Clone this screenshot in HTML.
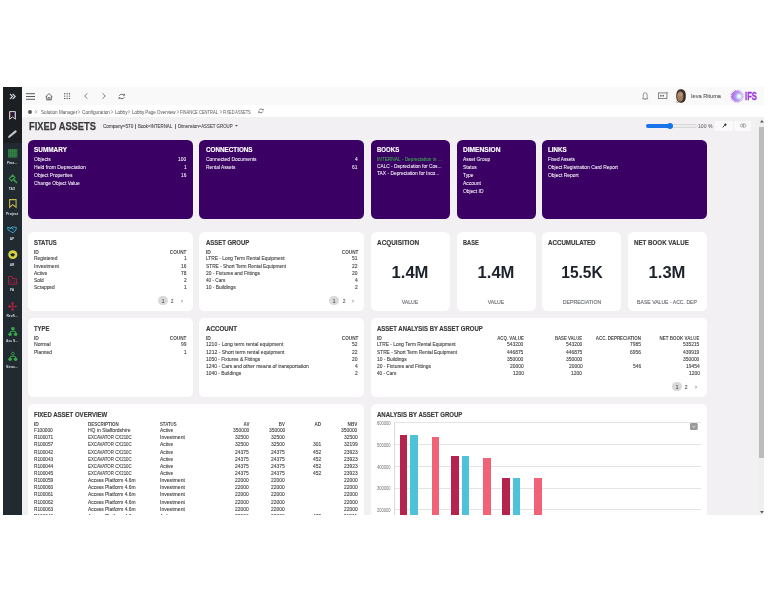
<!DOCTYPE html>
<html><head><meta charset="utf-8"><style>
html,body{margin:0;padding:0;background:#fff;width:768px;height:602px;overflow:hidden}
#frame{position:absolute;left:3px;top:87px;width:761.3px;height:428.2px;overflow:hidden}
#inner{position:absolute;left:-3px;top:-87px;width:768px;height:602px;will-change:transform}
.t{position:absolute;white-space:nowrap;font-family:"Liberation Sans", sans-serif}
</style></head><body>
<div id="frame"><div id="inner"><div style="position:absolute;left:3.00px;top:117.00px;width:762.00px;height:400.00px;background:#f2f0f3"></div><div style="position:absolute;left:3.00px;top:87.00px;width:762.00px;height:18.00px;background:#f9f9f9"></div><div style="position:absolute;left:21.70px;top:105.00px;width:743.00px;height:12.00px;background:#ffffff"></div><div style="position:absolute;left:3.00px;top:87.00px;width:18.70px;height:429.00px;background:#222a31"></div><div style="position:absolute;left:3.00px;top:87.00px;width:18.70px;height:55.50px;background:#1c1f22"></div><svg style="position:absolute;left:9.00px;top:92.60px;overflow:visible" width="7" height="7" viewBox="0 0 7 7"><path d="M1 1 L3.5 3.5 L1 6 M3.7 1 L6.2 3.5 L3.7 6" fill="none" stroke="#c5cad0" stroke-width="1.2"/></svg><svg style="position:absolute;left:9.00px;top:110.60px;overflow:visible" width="7" height="8.8" viewBox="0 0 7 8.8"><path d="M0.6 0.6 H6.4 V8.2 L3.5 5.9 L0.6 8.2 Z" fill="none" stroke="#d6d6da" stroke-width="1"/><rect x="1.1" y="1.1" width="0.9" height="5" fill="#a8304e"/><rect x="5.0" y="1.1" width="0.9" height="5" fill="#5e56a8"/></svg><svg style="position:absolute;left:8.00px;top:130.20px;overflow:visible" width="9" height="8" viewBox="0 0 9 8"><path d="M1.2 6.8 L7.6 1.4" stroke="#c4c8ce" stroke-width="2.1" stroke-linecap="round"/><path d="M0.6 7.5 L1.6 6.5" stroke="#9aa4b4" stroke-width="1.2"/></svg><svg style="position:absolute;left:7.65px;top:149.00px;overflow:visible" width="9.3" height="8.6" viewBox="0 0 9.3 8.6"><rect width="9.3" height="8.6" fill="#35844a"/><circle cx="1.16" cy="1.07" r="0.75" fill="#24512d" opacity="0.75"/><circle cx="1.16" cy="3.22" r="0.75" fill="#24512d" opacity="0.75"/><circle cx="1.16" cy="5.37" r="0.75" fill="#24512d" opacity="0.75"/><circle cx="1.16" cy="7.52" r="0.75" fill="#24512d" opacity="0.75"/><circle cx="3.49" cy="1.07" r="0.75" fill="#24512d" opacity="0.75"/><circle cx="3.49" cy="3.22" r="0.75" fill="#24512d" opacity="0.75"/><circle cx="3.49" cy="5.37" r="0.75" fill="#24512d" opacity="0.75"/><circle cx="3.49" cy="7.52" r="0.75" fill="#24512d" opacity="0.75"/><circle cx="5.82" cy="1.07" r="0.75" fill="#24512d" opacity="0.75"/><circle cx="5.82" cy="3.22" r="0.75" fill="#24512d" opacity="0.75"/><circle cx="5.82" cy="5.37" r="0.75" fill="#24512d" opacity="0.75"/><circle cx="5.82" cy="7.52" r="0.75" fill="#24512d" opacity="0.75"/><circle cx="8.15" cy="1.07" r="0.75" fill="#24512d" opacity="0.75"/><circle cx="8.15" cy="3.22" r="0.75" fill="#24512d" opacity="0.75"/><circle cx="8.15" cy="5.37" r="0.75" fill="#24512d" opacity="0.75"/><circle cx="8.15" cy="7.52" r="0.75" fill="#24512d" opacity="0.75"/></svg><div class="t" style="left:-137.70px;width:300px;text-align:center;top:160.99px;font-size:3.708px;line-height:4.45px;font-weight:700;color:#d5dae0;transform:scaleX(0.9579);transform-origin:50% 50%;">Fina...</div><svg style="position:absolute;left:8.00px;top:174.20px;overflow:visible" width="9.2" height="9.3" viewBox="0 0 9.2 9.3"><path d="M1.2 4.6 L4.6 1.2 L7 3.6 L3.6 7 Z" fill="none" stroke="#3aa14a" stroke-width="1.2"/><path d="M5.6 5.6 L8.6 8.6" stroke="#3aa14a" stroke-width="1.5" stroke-linecap="round"/></svg><div class="t" style="left:-137.70px;width:300px;text-align:center;top:186.99px;font-size:3.708px;line-height:4.45px;font-weight:700;color:#d5dae0;transform:scaleX(0.897);transform-origin:50% 50%;">TAX</div><svg style="position:absolute;left:8.60px;top:199.00px;overflow:visible" width="7.7" height="9" viewBox="0 0 7.7 9"><path d="M0.6 0.6 H7.1 V8.3 L3.85 5.6 L0.6 8.3 Z" fill="none" stroke="#c4b64a" stroke-width="1.1"/></svg><div class="t" style="left:-137.70px;width:300px;text-align:center;top:211.99px;font-size:3.708px;line-height:4.45px;font-weight:700;color:#d5dae0;transform:scaleX(0.9681);transform-origin:50% 50%;">Project</div><svg style="position:absolute;left:7.00px;top:225.50px;overflow:visible" width="10" height="7.4" viewBox="0 0 10 7.4"><path d="M0.6 1.2 L3.2 2 L5.6 1 L9.4 1.4 L9 4 L6 6.8 L3.6 5.6 L1 3.8 Z" fill="none" stroke="#3aa2c8" stroke-width="1"/><path d="M2.8 2.8 L5.2 2.2 L7.2 4.4" fill="none" stroke="#3aa2c8" stroke-width="0.8"/></svg><div class="t" style="left:-137.70px;width:300px;text-align:center;top:236.99px;font-size:3.708px;line-height:4.45px;font-weight:700;color:#d5dae0;transform:scaleX(0.892);transform-origin:50% 50%;">AP</div><svg style="position:absolute;left:7.70px;top:250.40px;overflow:visible" width="9.6" height="9.1" viewBox="0 0 9.6 9.1"><ellipse cx="4.8" cy="4.55" rx="4.6" ry="4.4" fill="#d8d243"/><path d="M2.3 4 Q4.6 2.2 7 4.2 L5.8 6.6 L3.2 6.2 Z" fill="#1f262c"/><path d="M0.3 3.2 Q0 4.6 0.6 6" stroke="#5fb04a" stroke-width="0.7" fill="none"/></svg><div class="t" style="left:-137.70px;width:300px;text-align:center;top:262.99px;font-size:3.708px;line-height:4.45px;font-weight:700;color:#d5dae0;transform:scaleX(0.874);transform-origin:50% 50%;">AR</div><svg style="position:absolute;left:8.20px;top:276.10px;overflow:visible" width="9.1" height="8.8" viewBox="0 0 9.1 8.8"><path d="M0.5 0.5 H4.4 V2.6 H8.6 V8.3 H0.5 Z" fill="none" stroke="#9c2340" stroke-width="1"/><path d="M2.6 3.2 V5 M6.2 4 V5.4 M1.6 6.2 H3.6 M5.2 6.4 H7.4" stroke="#9c2340" stroke-width="0.9"/></svg><div class="t" style="left:-137.70px;width:300px;text-align:center;top:287.99px;font-size:3.708px;line-height:4.45px;font-weight:700;color:#d5dae0;transform:scaleX(0.8915);transform-origin:50% 50%;">FA</div><svg style="position:absolute;left:7.60px;top:301.60px;overflow:visible" width="9.2" height="9" viewBox="0 0 9.2 9"><path d="M1.4 4.5 H8.2 M4.6 4.5 L4.6 1.2 M4.6 4.5 L4.6 7.8" stroke="#a82241" stroke-width="1"/><circle cx="1.6" cy="4.5" r="1.4" fill="#a82241"/><circle cx="4.6" cy="1.4" r="1.3" fill="#a82241"/><circle cx="4.6" cy="7.6" r="1.3" fill="#a82241"/><path d="M7.4 3 L9.2 4.5 L7.4 6Z" fill="#a82241"/></svg><div class="t" style="left:-137.70px;width:300px;text-align:center;top:313.99px;font-size:3.708px;line-height:4.45px;font-weight:700;color:#d5dae0;transform:scaleX(0.9039);transform-origin:50% 50%;">RevS...</div><svg style="position:absolute;left:7.60px;top:326.70px;overflow:visible" width="9.6" height="9" viewBox="0 0 9.6 9"><rect x="3.3" y="0.2" width="3.2" height="3" fill="#3aa64a"/><path d="M4.9 3 V4.5 M2.2 6 V4.5 H7.6 V6" stroke="#3aa64a" stroke-width="0.8" fill="none"/><circle cx="2.1" cy="7.2" r="1.8" fill="#3aa64a"/><circle cx="7.6" cy="7.2" r="1.8" fill="#3aa64a"/></svg><div class="t" style="left:-137.70px;width:300px;text-align:center;top:338.99px;font-size:3.708px;line-height:4.45px;font-weight:700;color:#d5dae0;transform:scaleX(0.883);transform-origin:50% 50%;">Acc S...</div><svg style="position:absolute;left:7.60px;top:351.80px;overflow:visible" width="9.6" height="9" viewBox="0 0 9.6 9"><circle cx="4.9" cy="1.6" r="1.4" fill="none" stroke="#3aa64a" stroke-width="0.8"/><path d="M4.9 3 V4.5 M2.2 6 V4.5 H7.6 V6" stroke="#3aa64a" stroke-width="0.8" fill="none"/><circle cx="2.1" cy="7.2" r="1.8" fill="#3aa64a"/><circle cx="7.6" cy="7.2" r="1.8" fill="#3aa64a"/></svg><div class="t" style="left:-137.70px;width:300px;text-align:center;top:364.99px;font-size:3.708px;line-height:4.45px;font-weight:700;color:#d5dae0;transform:scaleX(0.9534);transform-origin:50% 50%;">Struc...</div><svg style="position:absolute;left:26.30px;top:92.80px;overflow:visible" width="9" height="7" viewBox="0 0 9 7"><path d="M0 0.7H9M0 3.5H9M0 6.3H9" stroke="#5a5a5a" stroke-width="1"/></svg><svg style="position:absolute;left:45.20px;top:92.70px;overflow:visible" width="8" height="7.4" viewBox="0 0 8 7.4"><path d="M0.5 3.9 L4 0.6 L7.5 3.9 M1.6 3 V6.9 H6.4 V3 M3.1 6.9 V4.6 H4.9 V6.9" fill="none" stroke="#5a5a5a" stroke-width="0.85" stroke-linejoin="round"/></svg><svg style="position:absolute;left:64.40px;top:93.20px;overflow:visible" width="6.5" height="6.3" viewBox="0 0 6.5 6.3"><circle cx="0.70" cy="0.70" r="0.72" fill="#5a5a5a"/><circle cx="0.70" cy="3.10" r="0.72" fill="#5a5a5a"/><circle cx="0.70" cy="5.50" r="0.72" fill="#5a5a5a"/><circle cx="3.10" cy="0.70" r="0.72" fill="#5a5a5a"/><circle cx="3.10" cy="3.10" r="0.72" fill="#5a5a5a"/><circle cx="3.10" cy="5.50" r="0.72" fill="#5a5a5a"/><circle cx="5.50" cy="0.70" r="0.72" fill="#5a5a5a"/><circle cx="5.50" cy="3.10" r="0.72" fill="#5a5a5a"/><circle cx="5.50" cy="5.50" r="0.72" fill="#5a5a5a"/></svg><svg style="position:absolute;left:84.00px;top:93.40px;overflow:visible" width="4" height="6" viewBox="0 0 4 6"><path d="M3.4 0.4 L0.7 3 L3.4 5.6" fill="none" stroke="#5a5a5a" stroke-width="0.8"/></svg><svg style="position:absolute;left:101.90px;top:93.40px;overflow:visible" width="4" height="6" viewBox="0 0 4 6"><path d="M0.6 0.4 L3.3 3 L0.6 5.6" fill="none" stroke="#5a5a5a" stroke-width="0.8"/></svg><svg style="position:absolute;left:118.30px;top:92.80px;overflow:visible" width="7.6" height="7" viewBox="0 0 7.6 7"><path d="M6.3 2.6 A3 3 0 0 0 1.2 2.8 M1.3 4.4 A3 3 0 0 0 6.4 4.2" fill="none" stroke="#5a5a5a" stroke-width="0.9"/><path d="M5 2.6 H7 V0.6 Z M2.6 4.4 H0.6 V6.4 Z" fill="#5a5a5a"/></svg><svg style="position:absolute;left:641.90px;top:91.90px;overflow:visible" width="6.4" height="8" viewBox="0 0 6.4 8"><path d="M1.2 6 V3 A2 2.2 0 0 1 5.2 3 V6 L6 6.8 H0.4 Z" fill="none" stroke="#6a6a6a" stroke-width="0.7"/><path d="M2.4 7.3 H4" stroke="#6a6a6a" stroke-width="0.7"/></svg><svg style="position:absolute;left:658.00px;top:92.20px;overflow:visible" width="10" height="7" viewBox="0 0 10 7"><rect x="0.4" y="0.9" width="8.5" height="5.7" fill="none" stroke="#6a6a6a" stroke-width="0.8"/><rect x="2.2" y="2.9" width="1.3" height="1.7" fill="#555"/><rect x="4.6" y="2.9" width="1.3" height="1.7" fill="#555"/><path d="M8.2 0.2 L9.7 0.2 L9.7 1.6" fill="none" stroke="#888" stroke-width="0.5"/></svg><svg style="position:absolute;left:676.00px;top:88.80px;overflow:visible" width="10" height="14" viewBox="0 0 10 14"><path d="M5 0.2 C8.2 0.2 9.8 2.6 9.8 6.6 C9.8 10.2 9.2 13.8 5.4 13.8 C2 13.8 0.2 11.4 0.2 7 C0.2 2.8 1.8 0.2 5 0.2Z" fill="#3e2b22"/><path d="M4.2 2.6 C6.6 2.6 7.4 4.6 7.3 7.4 C7.2 10.4 6.2 12.6 4.4 12.6 C2.4 12.6 1.1 10.6 1.1 7.6 C1.1 4.6 2 2.6 4.2 2.6Z" fill="#9f7f62"/><ellipse cx="4.3" cy="5.6" rx="2.2" ry="2" fill="#b39377"/><path d="M0.4 11.4 Q1.2 13.4 3 13.8 L0.6 13.6Z" fill="#6c7a88"/></svg><div class="t" style="left:690.90px;top:93.14px;font-size:5.665px;line-height:6.80px;font-weight:400;color:#5d5d5d;transform:scaleX(0.9937);transform-origin:0 50%;-webkit-text-stroke:0.12px #5d5d5d;">Ieva Rituma</div><svg style="position:absolute;left:730.90px;top:89.50px;overflow:visible" width="12.4" height="12.4" viewBox="0 0 12.4 12.4"><defs><radialGradient id="ifsg" cx="0.7" cy="0.52" r="0.75"><stop offset="0" stop-color="#ffffff"/><stop offset="0.22" stop-color="#d8f0f8"/><stop offset="0.5" stop-color="#b89cf0"/><stop offset="1" stop-color="#a662e6"/></radialGradient></defs><line x1="9.80" y1="6.20" x2="12.30" y2="6.20" stroke="#a055e6" stroke-width="1.0" stroke-linecap="round" opacity="0.55"/><line x1="9.68" y1="7.13" x2="12.09" y2="7.78" stroke="#a055e6" stroke-width="1.0" stroke-linecap="round" opacity="0.55"/><line x1="9.32" y1="8.00" x2="11.48" y2="9.25" stroke="#a055e6" stroke-width="1.0" stroke-linecap="round" opacity="0.55"/><line x1="8.75" y1="8.75" x2="10.51" y2="10.51" stroke="#a055e6" stroke-width="1.0" stroke-linecap="round" opacity="0.55"/><line x1="8.00" y1="9.32" x2="9.25" y2="11.48" stroke="#a055e6" stroke-width="1.0" stroke-linecap="round" opacity="0.55"/><line x1="7.13" y1="9.68" x2="7.78" y2="12.09" stroke="#a055e6" stroke-width="1.0" stroke-linecap="round" opacity="0.55"/><line x1="6.20" y1="9.80" x2="6.20" y2="12.30" stroke="#a055e6" stroke-width="1.0" stroke-linecap="round" opacity="0.55"/><line x1="5.27" y1="9.68" x2="4.62" y2="12.09" stroke="#a055e6" stroke-width="1.0" stroke-linecap="round" opacity="0.67"/><line x1="4.40" y1="9.32" x2="3.15" y2="11.48" stroke="#a055e6" stroke-width="1.0" stroke-linecap="round" opacity="0.77"/><line x1="3.65" y1="8.75" x2="1.89" y2="10.51" stroke="#a055e6" stroke-width="1.0" stroke-linecap="round" opacity="0.87"/><line x1="3.08" y1="8.00" x2="0.92" y2="9.25" stroke="#a055e6" stroke-width="1.0" stroke-linecap="round" opacity="0.94"/><line x1="2.72" y1="7.13" x2="0.31" y2="7.78" stroke="#a055e6" stroke-width="1.0" stroke-linecap="round" opacity="0.98"/><line x1="2.60" y1="6.20" x2="0.10" y2="6.20" stroke="#a055e6" stroke-width="1.0" stroke-linecap="round" opacity="1.00"/><line x1="2.72" y1="5.27" x2="0.31" y2="4.62" stroke="#a055e6" stroke-width="1.0" stroke-linecap="round" opacity="0.98"/><line x1="3.08" y1="4.40" x2="0.92" y2="3.15" stroke="#a055e6" stroke-width="1.0" stroke-linecap="round" opacity="0.94"/><line x1="3.65" y1="3.65" x2="1.89" y2="1.89" stroke="#a055e6" stroke-width="1.0" stroke-linecap="round" opacity="0.87"/><line x1="4.40" y1="3.08" x2="3.15" y2="0.92" stroke="#a055e6" stroke-width="1.0" stroke-linecap="round" opacity="0.78"/><line x1="5.27" y1="2.72" x2="4.62" y2="0.31" stroke="#a055e6" stroke-width="1.0" stroke-linecap="round" opacity="0.67"/><line x1="6.20" y1="2.60" x2="6.20" y2="0.10" stroke="#a055e6" stroke-width="1.0" stroke-linecap="round" opacity="0.55"/><line x1="7.13" y1="2.72" x2="7.78" y2="0.31" stroke="#a055e6" stroke-width="1.0" stroke-linecap="round" opacity="0.55"/><line x1="8.00" y1="3.08" x2="9.25" y2="0.92" stroke="#a055e6" stroke-width="1.0" stroke-linecap="round" opacity="0.55"/><line x1="8.75" y1="3.65" x2="10.51" y2="1.89" stroke="#a055e6" stroke-width="1.0" stroke-linecap="round" opacity="0.55"/><line x1="9.32" y1="4.40" x2="11.48" y2="3.15" stroke="#a055e6" stroke-width="1.0" stroke-linecap="round" opacity="0.55"/><line x1="9.68" y1="5.27" x2="12.09" y2="4.62" stroke="#a055e6" stroke-width="1.0" stroke-linecap="round" opacity="0.55"/><circle cx="6.2" cy="6.2" r="5.2" fill="url(#ifsg)"/></svg><div class="t" style="left:744.60px;top:89.90px;font-size:11.2px;line-height:13.44px;font-weight:700;color:#9a36e0;transform:scaleX(0.6887);transform-origin:0 50%;-webkit-text-stroke:0.3px #9a36e0;">IFS</div><div style="position:absolute;left:28.2px;top:109.8px;width:4.1px;height:4.1px;border-radius:50%;background:#5a5a5a"></div><svg style="position:absolute;left:35.30px;top:110.10px;overflow:visible" width="2" height="3.8" viewBox="0 0 2 3.8"><path d="M0.3 0.3 L1.6 1.9 L0.3 3.5" fill="none" stroke="#707070" stroke-width="0.7"/></svg><div class="t" style="left:40.70px;top:110.21px;font-size:4.532px;line-height:5.44px;font-weight:400;color:#5e5e5e;transform:scaleX(1.0217);transform-origin:0 50%;-webkit-text-stroke:0.03px #5e5e5e;">Solution Manager</div><svg style="position:absolute;left:78.00px;top:110.10px;overflow:visible" width="2" height="3.8" viewBox="0 0 2 3.8"><path d="M0.3 0.3 L1.6 1.9 L0.3 3.5" fill="none" stroke="#707070" stroke-width="0.7"/></svg><div class="t" style="left:81.60px;top:110.21px;font-size:4.532px;line-height:5.44px;font-weight:400;color:#5e5e5e;transform:scaleX(1.0397);transform-origin:0 50%;-webkit-text-stroke:0.03px #5e5e5e;">Configuration</div><svg style="position:absolute;left:111.40px;top:110.10px;overflow:visible" width="2" height="3.8" viewBox="0 0 2 3.8"><path d="M0.3 0.3 L1.6 1.9 L0.3 3.5" fill="none" stroke="#707070" stroke-width="0.7"/></svg><div class="t" style="left:114.50px;top:110.21px;font-size:4.532px;line-height:5.44px;font-weight:400;color:#5e5e5e;transform:scaleX(1.0093);transform-origin:0 50%;-webkit-text-stroke:0.03px #5e5e5e;">Lobby</div><svg style="position:absolute;left:128.40px;top:110.10px;overflow:visible" width="2" height="3.8" viewBox="0 0 2 3.8"><path d="M0.3 0.3 L1.6 1.9 L0.3 3.5" fill="none" stroke="#707070" stroke-width="0.7"/></svg><div class="t" style="left:131.70px;top:110.21px;font-size:4.532px;line-height:5.44px;font-weight:400;color:#5e5e5e;transform:scaleX(0.9865);transform-origin:0 50%;-webkit-text-stroke:0.03px #5e5e5e;">Lobby Page Overview</div><svg style="position:absolute;left:177.00px;top:110.10px;overflow:visible" width="2" height="3.8" viewBox="0 0 2 3.8"><path d="M0.3 0.3 L1.6 1.9 L0.3 3.5" fill="none" stroke="#707070" stroke-width="0.7"/></svg><div class="t" style="left:180.30px;top:110.21px;font-size:4.532px;line-height:5.44px;font-weight:400;color:#5e5e5e;transform:scaleX(0.8993);transform-origin:0 50%;-webkit-text-stroke:0.03px #5e5e5e;">FINANCE CENTRAL</div><svg style="position:absolute;left:220.00px;top:110.10px;overflow:visible" width="2" height="3.8" viewBox="0 0 2 3.8"><path d="M0.3 0.3 L1.6 1.9 L0.3 3.5" fill="none" stroke="#707070" stroke-width="0.7"/></svg><div class="t" style="left:223.00px;top:110.21px;font-size:4.532px;line-height:5.44px;font-weight:400;color:#5e5e5e;transform:scaleX(0.8606);transform-origin:0 50%;-webkit-text-stroke:0.03px #5e5e5e;">FIXED ASSETS</div><svg style="position:absolute;left:258.10px;top:108.30px;overflow:visible" width="5.8" height="5.8" viewBox="0 0 5.8 5.8"><path d="M5.0 2.0 A2.5 2.5 0 0 0 0.8 2.3 M0.8 3.8 A2.5 2.5 0 0 0 5.0 3.5" fill="none" stroke="#666" stroke-width="0.8"/><path d="M3.8 2.3 H5.6 V0.5 Z M2.0 3.5 H0.2 V5.3 Z" fill="#666"/></svg><div class="t" style="left:28.80px;top:119.90px;font-size:11.2px;line-height:13.44px;font-weight:700;color:#3a3a3a;transform:scaleX(0.8324);transform-origin:0 50%;-webkit-text-stroke:0.25px #3a3a3a;">FIXED ASSETS</div><div class="t" style="left:103.10px;top:124.11px;font-size:4.635px;line-height:5.56px;font-weight:400;color:#505050;transform:scaleX(1.0016);transform-origin:0 50%;-webkit-text-stroke:0.12px #505050;">Company=570</div><div style="position:absolute;left:135.30px;top:123.60px;width:0.50px;height:5.40px;background:#777"></div><div class="t" style="left:138.20px;top:124.11px;font-size:4.635px;line-height:5.56px;font-weight:400;color:#505050;transform:scaleX(0.9473);transform-origin:0 50%;-webkit-text-stroke:0.12px #505050;">Book=INTERNAL</div><div style="position:absolute;left:175.10px;top:123.60px;width:0.50px;height:5.40px;background:#777"></div><div class="t" style="left:178.10px;top:124.11px;font-size:4.635px;line-height:5.56px;font-weight:400;color:#505050;transform:scaleX(0.9435);transform-origin:0 50%;-webkit-text-stroke:0.12px #505050;">Dimension=ASSET GROUP</div><svg style="position:absolute;left:235.30px;top:125.20px;overflow:visible" width="2.8" height="1.6" viewBox="0 0 2.8 1.6"><path d="M0 0 H2.8 L1.4 1.6 Z" fill="#444"/></svg><div style="position:absolute;left:645.80px;top:124.40px;width:50.90px;height:3.60px;background:#ececec;border:0.5px solid #d8d8d8;border-radius:2px;box-sizing:border-box"></div><div style="position:absolute;left:645.80px;top:124.40px;width:24.00px;height:3.60px;background:#1a73e8;border-radius:2px"></div><div style="position:absolute;left:666.8px;top:123.1px;width:6px;height:6px;border-radius:50%;background:#1a73e8"></div><div class="t" style="left:697.50px;top:123.48px;font-size:5.305px;line-height:6.37px;font-weight:400;color:#777;transform:scaleX(0.9581);transform-origin:0 50%;-webkit-text-stroke:0.12px #777;">100 %</div><div style="position:absolute;left:715.30px;top:120.70px;width:17.50px;height:10.50px;background:#fafafa;border-radius:1px"></div><div style="position:absolute;left:734.20px;top:120.70px;width:16.60px;height:10.50px;background:#fafafa;border-radius:1px"></div><svg style="position:absolute;left:721.50px;top:123.00px;overflow:visible" width="5" height="5" viewBox="0 0 5 5"><path d="M0.6 4.4 L2.8 2.2" stroke="#333" stroke-width="1"/><path d="M2 1.4 L3.2 0.2 L4.8 1.8 L3.6 3 Z" fill="#333"/></svg><svg style="position:absolute;left:739.80px;top:123.20px;overflow:visible" width="5.6" height="5" viewBox="0 0 5.6 5"><circle cx="1.8" cy="2.5" r="1.4" fill="none" stroke="#777" stroke-width="0.6"/><path d="M3.2 0.8 H4.2 A1.7 1.7 0 0 1 4.2 4.2 H3.2 Z" fill="none" stroke="#777" stroke-width="0.6"/></svg><div style="position:absolute;left:758.30px;top:117.00px;width:6.20px;height:398.50px;background:#efefef"></div><div style="position:absolute;left:759.20px;top:127.00px;width:5.00px;height:331.00px;background:#bdbdbd"></div><svg style="position:absolute;left:759.80px;top:119.80px;overflow:visible" width="3.8" height="2.4" viewBox="0 0 3.8 2.4"><path d="M0 2.4 H3.8 L1.9 0 Z" fill="#555"/></svg><svg style="position:absolute;left:759.80px;top:511.20px;overflow:visible" width="3.8" height="2.4" viewBox="0 0 3.8 2.4"><path d="M0 0 H3.8 L1.9 2.4 Z" fill="#555"/></svg><div style="position:absolute;left:28.00px;top:139.80px;width:164.80px;height:79.00px;background:#3a0063;border-radius:5.5px"></div><div class="t" style="left:34.20px;top:146.28px;font-size:6.571px;line-height:7.89px;font-weight:700;color:#ffffff;transform:scaleX(0.978);transform-origin:0 50%;-webkit-text-stroke:0.15px #ffffff;">SUMMARY</div><div class="t" style="left:34.20px;top:156.86px;font-size:4.903px;line-height:5.88px;font-weight:400;color:#ffffff;transform:scaleX(1.0057);transform-origin:0 50%;-webkit-text-stroke:0.04px #ffffff;">Objects</div><div class="t" style="left:34.20px;top:164.86px;font-size:4.903px;line-height:5.88px;font-weight:400;color:#ffffff;transform:scaleX(1.0354);transform-origin:0 50%;-webkit-text-stroke:0.04px #ffffff;">Held from Depreciation</div><div class="t" style="left:34.20px;top:172.86px;font-size:4.903px;line-height:5.88px;font-weight:400;color:#ffffff;transform:scaleX(1.0197);transform-origin:0 50%;-webkit-text-stroke:0.04px #ffffff;">Object Properties</div><div class="t" style="left:34.20px;top:180.86px;font-size:4.903px;line-height:5.88px;font-weight:400;color:#ffffff;transform:scaleX(0.9919);transform-origin:0 50%;-webkit-text-stroke:0.04px #ffffff;">Change Object Value</div><div class="t" style="right:581.50px;top:156.86px;font-size:4.903px;line-height:5.88px;font-weight:400;color:#ffffff;transform:scaleX(0.9981);transform-origin:100% 50%;-webkit-text-stroke:0.04px #fff;">100</div><div class="t" style="right:581.50px;top:164.86px;font-size:4.903px;line-height:5.88px;font-weight:400;color:#ffffff;transform:scaleX(0.9981);transform-origin:100% 50%;-webkit-text-stroke:0.04px #fff;">1</div><div class="t" style="right:581.50px;top:172.86px;font-size:4.903px;line-height:5.88px;font-weight:400;color:#ffffff;transform:scaleX(0.9981);transform-origin:100% 50%;-webkit-text-stroke:0.04px #fff;">16</div><div style="position:absolute;left:199.40px;top:139.80px;width:164.80px;height:79.00px;background:#3a0063;border-radius:5.5px"></div><div class="t" style="left:205.60px;top:146.28px;font-size:6.571px;line-height:7.89px;font-weight:700;color:#ffffff;transform:scaleX(0.96);transform-origin:0 50%;-webkit-text-stroke:0.15px #ffffff;">CONNECTIONS</div><div class="t" style="left:205.60px;top:156.86px;font-size:4.903px;line-height:5.88px;font-weight:400;color:#ffffff;transform:scaleX(1.0158);transform-origin:0 50%;-webkit-text-stroke:0.04px #ffffff;">Connected Documents</div><div class="t" style="left:205.60px;top:164.86px;font-size:4.903px;line-height:5.88px;font-weight:400;color:#ffffff;transform:scaleX(0.9833);transform-origin:0 50%;-webkit-text-stroke:0.04px #ffffff;">Rental Assets</div><div class="t" style="right:410.10px;top:156.86px;font-size:4.903px;line-height:5.88px;font-weight:400;color:#ffffff;transform:scaleX(0.9981);transform-origin:100% 50%;-webkit-text-stroke:0.04px #fff;">4</div><div class="t" style="right:410.10px;top:164.86px;font-size:4.903px;line-height:5.88px;font-weight:400;color:#ffffff;transform:scaleX(0.9981);transform-origin:100% 50%;-webkit-text-stroke:0.04px #fff;">61</div><div style="position:absolute;left:370.80px;top:139.80px;width:79.10px;height:79.00px;background:#3a0063;border-radius:5.5px"></div><div class="t" style="left:377.00px;top:146.28px;font-size:6.571px;line-height:7.89px;font-weight:700;color:#ffffff;transform:scaleX(0.921);transform-origin:0 50%;-webkit-text-stroke:0.15px #ffffff;">BOOKS</div><div class="t" style="left:377.00px;top:156.86px;font-size:4.903px;line-height:5.88px;font-weight:400;color:#3cb54a;transform:scaleX(0.9761);transform-origin:0 50%;-webkit-text-stroke:0.04px #3cb54a;">INTERNAL - Depreciation in ...</div><div class="t" style="left:377.00px;top:163.86px;font-size:4.903px;line-height:5.88px;font-weight:400;color:#ffffff;transform:scaleX(0.976);transform-origin:0 50%;-webkit-text-stroke:0.04px #ffffff;">CALC - Depreciation for Cos...</div><div class="t" style="left:377.00px;top:170.86px;font-size:4.903px;line-height:5.88px;font-weight:400;color:#ffffff;transform:scaleX(0.9949);transform-origin:0 50%;-webkit-text-stroke:0.04px #ffffff;">TAX - Depreciation for Inco...</div><div style="position:absolute;left:456.50px;top:139.80px;width:79.10px;height:79.00px;background:#3a0063;border-radius:5.5px"></div><div class="t" style="left:462.70px;top:146.28px;font-size:6.571px;line-height:7.89px;font-weight:700;color:#ffffff;transform:scaleX(1.0071);transform-origin:0 50%;-webkit-text-stroke:0.15px #ffffff;">DIMENSION</div><div class="t" style="left:462.70px;top:156.86px;font-size:4.903px;line-height:5.88px;font-weight:400;color:#ffffff;transform:scaleX(0.9969);transform-origin:0 50%;-webkit-text-stroke:0.04px #ffffff;">Asset Group</div><div class="t" style="left:462.70px;top:164.86px;font-size:4.903px;line-height:5.88px;font-weight:400;color:#ffffff;transform:scaleX(0.9937);transform-origin:0 50%;-webkit-text-stroke:0.04px #ffffff;">Status</div><div class="t" style="left:462.70px;top:172.86px;font-size:4.903px;line-height:5.88px;font-weight:400;color:#ffffff;transform:scaleX(0.9901);transform-origin:0 50%;-webkit-text-stroke:0.04px #ffffff;">Type</div><div class="t" style="left:462.70px;top:180.86px;font-size:4.903px;line-height:5.88px;font-weight:400;color:#ffffff;transform:scaleX(1.0128);transform-origin:0 50%;-webkit-text-stroke:0.04px #ffffff;">Account</div><div class="t" style="left:462.70px;top:188.86px;font-size:4.903px;line-height:5.88px;font-weight:400;color:#ffffff;transform:scaleX(1.0021);transform-origin:0 50%;-webkit-text-stroke:0.04px #ffffff;">Object ID</div><div style="position:absolute;left:542.20px;top:139.80px;width:164.80px;height:79.00px;background:#3a0063;border-radius:5.5px"></div><div class="t" style="left:548.40px;top:146.28px;font-size:6.571px;line-height:7.89px;font-weight:700;color:#ffffff;transform:scaleX(0.9463);transform-origin:0 50%;-webkit-text-stroke:0.15px #ffffff;">LINKS</div><div class="t" style="left:548.40px;top:156.86px;font-size:4.903px;line-height:5.88px;font-weight:400;color:#ffffff;transform:scaleX(0.9735);transform-origin:0 50%;-webkit-text-stroke:0.04px #ffffff;">Fixed Assets</div><div class="t" style="left:548.40px;top:164.86px;font-size:4.903px;line-height:5.88px;font-weight:400;color:#ffffff;transform:scaleX(1.0056);transform-origin:0 50%;-webkit-text-stroke:0.04px #ffffff;">Object Registration Card Report</div><div class="t" style="left:548.40px;top:172.86px;font-size:4.903px;line-height:5.88px;font-weight:400;color:#ffffff;transform:scaleX(1.0152);transform-origin:0 50%;-webkit-text-stroke:0.04px #ffffff;">Object Report</div><div style="position:absolute;left:28.00px;top:232.40px;width:164.80px;height:79.00px;background:#ffffff;border-radius:5.5px"></div><div class="t" style="left:34.20px;top:238.90px;font-size:6.976px;line-height:8.37px;font-weight:700;color:#3a3a3a;transform:scaleX(0.8494);transform-origin:0 50%;-webkit-text-stroke:0.15px #3a3a3a;">STATUS</div><div class="t" style="left:34.20px;top:249.86px;font-size:4.903px;line-height:5.88px;font-weight:700;color:#474747;transform:scaleX(1.0088);transform-origin:0 50%;">ID</div><div class="t" style="right:581.50px;top:249.86px;font-size:4.903px;line-height:5.88px;font-weight:700;color:#474747;transform:scaleX(0.9536);transform-origin:100% 50%;">COUNT</div><div class="t" style="left:34.20px;top:255.86px;font-size:4.903px;line-height:5.88px;font-weight:400;color:#484848;transform:scaleX(0.9903);transform-origin:0 50%;-webkit-text-stroke:0.12px #484848;">Registered</div><div class="t" style="right:581.50px;top:255.86px;font-size:4.903px;line-height:5.88px;font-weight:400;color:#484848;transform:scaleX(0.9981);transform-origin:100% 50%;-webkit-text-stroke:0.12px #484848;">1</div><div class="t" style="left:34.20px;top:263.86px;font-size:4.903px;line-height:5.88px;font-weight:400;color:#484848;transform:scaleX(1.0406);transform-origin:0 50%;-webkit-text-stroke:0.12px #484848;">Investment</div><div class="t" style="right:581.50px;top:263.86px;font-size:4.903px;line-height:5.88px;font-weight:400;color:#484848;transform:scaleX(0.9981);transform-origin:100% 50%;-webkit-text-stroke:0.12px #484848;">16</div><div class="t" style="left:34.20px;top:270.86px;font-size:4.903px;line-height:5.88px;font-weight:400;color:#484848;transform:scaleX(0.99);transform-origin:0 50%;-webkit-text-stroke:0.12px #484848;">Active</div><div class="t" style="right:581.50px;top:270.86px;font-size:4.903px;line-height:5.88px;font-weight:400;color:#484848;transform:scaleX(0.9981);transform-origin:100% 50%;-webkit-text-stroke:0.12px #484848;">78</div><div class="t" style="left:34.20px;top:277.86px;font-size:4.903px;line-height:5.88px;font-weight:400;color:#484848;transform:scaleX(0.9791);transform-origin:0 50%;-webkit-text-stroke:0.12px #484848;">Sold</div><div class="t" style="right:581.50px;top:277.86px;font-size:4.903px;line-height:5.88px;font-weight:400;color:#484848;transform:scaleX(0.9981);transform-origin:100% 50%;-webkit-text-stroke:0.12px #484848;">2</div><div class="t" style="left:34.20px;top:284.86px;font-size:4.903px;line-height:5.88px;font-weight:400;color:#484848;transform:scaleX(0.9908);transform-origin:0 50%;-webkit-text-stroke:0.12px #484848;">Scrapped</div><div class="t" style="right:581.50px;top:284.86px;font-size:4.903px;line-height:5.88px;font-weight:400;color:#484848;transform:scaleX(0.9981);transform-origin:100% 50%;-webkit-text-stroke:0.12px #484848;">1</div><div style="position:absolute;left:157.90px;top:295.70px;width:9.8px;height:9.8px;border-radius:50%;background:#d9d9d9"></div><div class="t" style="left:12.80px;width:300px;text-align:center;top:298.86px;font-size:4.903px;line-height:5.88px;font-weight:400;color:#555;transform:scaleX(0.9981);transform-origin:50% 50%;-webkit-text-stroke:0.12px #555;">1</div><div class="t" style="left:22.40px;width:300px;text-align:center;top:298.86px;font-size:4.903px;line-height:5.88px;font-weight:400;color:#5a5a5a;transform:scaleX(0.9981);transform-origin:50% 50%;-webkit-text-stroke:0.12px #5a5a5a;">2</div><div class="t" style="left:31.80px;width:300px;text-align:center;top:299.31px;font-size:4.429px;line-height:5.31px;font-weight:400;color:#999;transform:scaleX(0.9506);transform-origin:50% 50%;-webkit-text-stroke:0.12px #999;">&gt;</div><div style="position:absolute;left:199.40px;top:232.40px;width:164.80px;height:79.00px;background:#ffffff;border-radius:5.5px"></div><div class="t" style="left:205.60px;top:238.90px;font-size:6.976px;line-height:8.37px;font-weight:700;color:#3a3a3a;transform:scaleX(0.8513);transform-origin:0 50%;-webkit-text-stroke:0.15px #3a3a3a;">ASSET GROUP</div><div class="t" style="left:205.60px;top:249.86px;font-size:4.903px;line-height:5.88px;font-weight:700;color:#474747;transform:scaleX(1.0088);transform-origin:0 50%;">ID</div><div class="t" style="right:410.10px;top:249.86px;font-size:4.903px;line-height:5.88px;font-weight:700;color:#474747;transform:scaleX(0.9536);transform-origin:100% 50%;">COUNT</div><div class="t" style="left:205.60px;top:255.86px;font-size:4.903px;line-height:5.88px;font-weight:400;color:#484848;transform:scaleX(0.987);transform-origin:0 50%;-webkit-text-stroke:0.12px #484848;">LTRE - Long Term Rental Equipment</div><div class="t" style="right:410.10px;top:255.86px;font-size:4.903px;line-height:5.88px;font-weight:400;color:#484848;transform:scaleX(0.9981);transform-origin:100% 50%;-webkit-text-stroke:0.12px #484848;">51</div><div class="t" style="left:205.60px;top:263.86px;font-size:4.903px;line-height:5.88px;font-weight:400;color:#484848;transform:scaleX(0.9833);transform-origin:0 50%;-webkit-text-stroke:0.12px #484848;">STRE - Short Term Rental Equipment</div><div class="t" style="right:410.10px;top:263.86px;font-size:4.903px;line-height:5.88px;font-weight:400;color:#484848;transform:scaleX(0.9981);transform-origin:100% 50%;-webkit-text-stroke:0.12px #484848;">22</div><div class="t" style="left:205.60px;top:270.86px;font-size:4.903px;line-height:5.88px;font-weight:400;color:#484848;transform:scaleX(1.0004);transform-origin:0 50%;-webkit-text-stroke:0.12px #484848;">20 - Fixtures and Fittings</div><div class="t" style="right:410.10px;top:270.86px;font-size:4.903px;line-height:5.88px;font-weight:400;color:#484848;transform:scaleX(0.9981);transform-origin:100% 50%;-webkit-text-stroke:0.12px #484848;">20</div><div class="t" style="left:205.60px;top:277.86px;font-size:4.903px;line-height:5.88px;font-weight:400;color:#484848;transform:scaleX(0.9578);transform-origin:0 50%;-webkit-text-stroke:0.12px #484848;">40 - Cars</div><div class="t" style="right:410.10px;top:277.86px;font-size:4.903px;line-height:5.88px;font-weight:400;color:#484848;transform:scaleX(0.9981);transform-origin:100% 50%;-webkit-text-stroke:0.12px #484848;">4</div><div class="t" style="left:205.60px;top:284.86px;font-size:4.903px;line-height:5.88px;font-weight:400;color:#484848;transform:scaleX(1.0025);transform-origin:0 50%;-webkit-text-stroke:0.12px #484848;">10 - Buildings</div><div class="t" style="right:410.10px;top:284.86px;font-size:4.903px;line-height:5.88px;font-weight:400;color:#484848;transform:scaleX(0.9981);transform-origin:100% 50%;-webkit-text-stroke:0.12px #484848;">2</div><div style="position:absolute;left:329.30px;top:295.70px;width:9.8px;height:9.8px;border-radius:50%;background:#d9d9d9"></div><div class="t" style="left:184.20px;width:300px;text-align:center;top:298.86px;font-size:4.903px;line-height:5.88px;font-weight:400;color:#555;transform:scaleX(0.9981);transform-origin:50% 50%;-webkit-text-stroke:0.12px #555;">1</div><div class="t" style="left:193.80px;width:300px;text-align:center;top:298.86px;font-size:4.903px;line-height:5.88px;font-weight:400;color:#5a5a5a;transform:scaleX(0.9981);transform-origin:50% 50%;-webkit-text-stroke:0.12px #5a5a5a;">2</div><div class="t" style="left:203.20px;width:300px;text-align:center;top:299.31px;font-size:4.429px;line-height:5.31px;font-weight:400;color:#999;transform:scaleX(0.9506);transform-origin:50% 50%;-webkit-text-stroke:0.12px #999;">&gt;</div><div style="position:absolute;left:370.80px;top:232.40px;width:79.10px;height:79.00px;background:#ffffff;border-radius:5.5px"></div><div class="t" style="left:377.00px;top:238.90px;font-size:6.976px;line-height:8.37px;font-weight:700;color:#3a3a3a;transform:scaleX(0.9196);transform-origin:0 50%;-webkit-text-stroke:0.15px #3a3a3a;">ACQUISITION</div><div class="t" style="left:260.35px;width:300px;text-align:center;top:263.29px;font-size:16.068px;line-height:19.28px;font-weight:700;color:#1c222c;transform:scaleX(1.0348);transform-origin:50% 50%;">1.4M</div><div class="t" style="left:260.35px;width:300px;text-align:center;top:299.04px;font-size:5.768px;line-height:6.92px;font-weight:400;color:#666a70;transform:scaleX(0.9031);transform-origin:50% 50%;-webkit-text-stroke:0.12px #666a70;">VALUE</div><div style="position:absolute;left:456.50px;top:232.40px;width:79.10px;height:79.00px;background:#ffffff;border-radius:5.5px"></div><div class="t" style="left:462.70px;top:238.90px;font-size:6.976px;line-height:8.37px;font-weight:700;color:#3a3a3a;transform:scaleX(0.8099);transform-origin:0 50%;-webkit-text-stroke:0.15px #3a3a3a;">BASE</div><div class="t" style="left:346.05px;width:300px;text-align:center;top:263.29px;font-size:16.068px;line-height:19.28px;font-weight:700;color:#1c222c;transform:scaleX(1.0348);transform-origin:50% 50%;">1.4M</div><div class="t" style="left:346.05px;width:300px;text-align:center;top:299.04px;font-size:5.768px;line-height:6.92px;font-weight:400;color:#666a70;transform:scaleX(0.9031);transform-origin:50% 50%;-webkit-text-stroke:0.12px #666a70;">VALUE</div><div style="position:absolute;left:542.20px;top:232.40px;width:79.10px;height:79.00px;background:#ffffff;border-radius:5.5px"></div><div class="t" style="left:548.40px;top:238.90px;font-size:6.976px;line-height:8.37px;font-weight:700;color:#3a3a3a;transform:scaleX(0.8865);transform-origin:0 50%;-webkit-text-stroke:0.15px #3a3a3a;">ACCUMULATED</div><div class="t" style="left:431.75px;width:300px;text-align:center;top:263.29px;font-size:16.068px;line-height:19.28px;font-weight:700;color:#1c222c;transform:scaleX(0.9684);transform-origin:50% 50%;">15.5K</div><div class="t" style="left:431.75px;width:300px;text-align:center;top:299.04px;font-size:5.768px;line-height:6.92px;font-weight:400;color:#666a70;transform:scaleX(0.9019);transform-origin:50% 50%;-webkit-text-stroke:0.12px #666a70;">DEPRECIATION</div><div style="position:absolute;left:627.90px;top:232.40px;width:79.10px;height:79.00px;background:#ffffff;border-radius:5.5px"></div><div class="t" style="left:634.10px;top:238.90px;font-size:6.976px;line-height:8.37px;font-weight:700;color:#3a3a3a;transform:scaleX(0.8864);transform-origin:0 50%;-webkit-text-stroke:0.15px #3a3a3a;">NET BOOK VALUE</div><div class="t" style="left:517.45px;width:300px;text-align:center;top:263.29px;font-size:16.068px;line-height:19.28px;font-weight:700;color:#1c222c;transform:scaleX(1.0348);transform-origin:50% 50%;">1.3M</div><div class="t" style="left:517.45px;width:300px;text-align:center;top:299.04px;font-size:5.768px;line-height:6.92px;font-weight:400;color:#666a70;transform:scaleX(0.8886);transform-origin:50% 50%;-webkit-text-stroke:0.12px #666a70;">BASE VALUE - ACC. DEP</div><div style="position:absolute;left:28.00px;top:318.30px;width:164.80px;height:79.00px;background:#ffffff;border-radius:5.5px"></div><div class="t" style="left:34.20px;top:324.90px;font-size:6.976px;line-height:8.37px;font-weight:700;color:#3a3a3a;transform:scaleX(0.8399);transform-origin:0 50%;-webkit-text-stroke:0.15px #3a3a3a;">TYPE</div><div class="t" style="left:34.20px;top:335.86px;font-size:4.903px;line-height:5.88px;font-weight:700;color:#474747;transform:scaleX(1.0088);transform-origin:0 50%;">ID</div><div class="t" style="right:581.50px;top:335.86px;font-size:4.903px;line-height:5.88px;font-weight:700;color:#474747;transform:scaleX(0.9536);transform-origin:100% 50%;">COUNT</div><div class="t" style="left:34.20px;top:341.86px;font-size:4.903px;line-height:5.88px;font-weight:400;color:#484848;transform:scaleX(1.056);transform-origin:0 50%;-webkit-text-stroke:0.12px #484848;">Normal</div><div class="t" style="right:581.50px;top:341.86px;font-size:4.903px;line-height:5.88px;font-weight:400;color:#484848;transform:scaleX(0.9981);transform-origin:100% 50%;-webkit-text-stroke:0.12px #484848;">99</div><div class="t" style="left:34.20px;top:349.86px;font-size:4.903px;line-height:5.88px;font-weight:400;color:#484848;transform:scaleX(1.0085);transform-origin:0 50%;-webkit-text-stroke:0.12px #484848;">Planned</div><div class="t" style="right:581.50px;top:349.86px;font-size:4.903px;line-height:5.88px;font-weight:400;color:#484848;transform:scaleX(0.9981);transform-origin:100% 50%;-webkit-text-stroke:0.12px #484848;">1</div><div style="position:absolute;left:199.40px;top:318.30px;width:164.80px;height:79.00px;background:#ffffff;border-radius:5.5px"></div><div class="t" style="left:205.60px;top:324.90px;font-size:6.976px;line-height:8.37px;font-weight:700;color:#3a3a3a;transform:scaleX(0.8897);transform-origin:0 50%;-webkit-text-stroke:0.15px #3a3a3a;">ACCOUNT</div><div class="t" style="left:205.60px;top:335.86px;font-size:4.903px;line-height:5.88px;font-weight:700;color:#474747;transform:scaleX(1.0088);transform-origin:0 50%;">ID</div><div class="t" style="right:410.10px;top:335.86px;font-size:4.903px;line-height:5.88px;font-weight:700;color:#474747;transform:scaleX(0.9536);transform-origin:100% 50%;">COUNT</div><div class="t" style="left:205.60px;top:341.86px;font-size:4.903px;line-height:5.88px;font-weight:400;color:#484848;transform:scaleX(1.0302);transform-origin:0 50%;-webkit-text-stroke:0.12px #484848;">1210 - Long term rental equipment</div><div class="t" style="right:410.10px;top:341.86px;font-size:4.903px;line-height:5.88px;font-weight:400;color:#484848;transform:scaleX(0.9981);transform-origin:100% 50%;-webkit-text-stroke:0.12px #484848;">52</div><div class="t" style="left:205.60px;top:349.86px;font-size:4.903px;line-height:5.88px;font-weight:400;color:#484848;transform:scaleX(1.0344);transform-origin:0 50%;-webkit-text-stroke:0.12px #484848;">1212 - Short term rental equipment</div><div class="t" style="right:410.10px;top:349.86px;font-size:4.903px;line-height:5.88px;font-weight:400;color:#484848;transform:scaleX(0.9981);transform-origin:100% 50%;-webkit-text-stroke:0.12px #484848;">22</div><div class="t" style="left:205.60px;top:356.86px;font-size:4.903px;line-height:5.88px;font-weight:400;color:#484848;transform:scaleX(0.9984);transform-origin:0 50%;-webkit-text-stroke:0.12px #484848;">1050 - Fixtures &amp; Fittings</div><div class="t" style="right:410.10px;top:356.86px;font-size:4.903px;line-height:5.88px;font-weight:400;color:#484848;transform:scaleX(0.9981);transform-origin:100% 50%;-webkit-text-stroke:0.12px #484848;">20</div><div class="t" style="left:205.60px;top:363.86px;font-size:4.903px;line-height:5.88px;font-weight:400;color:#484848;transform:scaleX(1.0247);transform-origin:0 50%;-webkit-text-stroke:0.12px #484848;">1240 - Cars and other means of transportation</div><div class="t" style="right:410.10px;top:363.86px;font-size:4.903px;line-height:5.88px;font-weight:400;color:#484848;transform:scaleX(0.9981);transform-origin:100% 50%;-webkit-text-stroke:0.12px #484848;">4</div><div class="t" style="left:205.60px;top:370.86px;font-size:4.903px;line-height:5.88px;font-weight:400;color:#484848;transform:scaleX(1.0018);transform-origin:0 50%;-webkit-text-stroke:0.12px #484848;">1040 - Buildings</div><div class="t" style="right:410.10px;top:370.86px;font-size:4.903px;line-height:5.88px;font-weight:400;color:#484848;transform:scaleX(0.9981);transform-origin:100% 50%;-webkit-text-stroke:0.12px #484848;">2</div><div style="position:absolute;left:370.80px;top:318.30px;width:336.20px;height:79.00px;background:#ffffff;border-radius:5.5px"></div><div class="t" style="left:377.00px;top:324.90px;font-size:6.976px;line-height:8.37px;font-weight:700;color:#3a3a3a;transform:scaleX(0.8567);transform-origin:0 50%;-webkit-text-stroke:0.15px #3a3a3a;">ASSET ANALYSIS BY ASSET GROUP</div><div class="t" style="left:377.00px;top:335.86px;font-size:4.903px;line-height:5.88px;font-weight:700;color:#474747;transform:scaleX(1.0088);transform-origin:0 50%;">ID</div><div class="t" style="right:244.60px;top:335.86px;font-size:4.903px;line-height:5.88px;font-weight:700;color:#474747;transform:scaleX(0.8943);transform-origin:100% 50%;">ACQ. VALUE</div><div class="t" style="right:185.80px;top:335.86px;font-size:4.903px;line-height:5.88px;font-weight:700;color:#474747;transform:scaleX(0.8754);transform-origin:100% 50%;">BASE VALUE</div><div class="t" style="right:127.00px;top:335.86px;font-size:4.903px;line-height:5.88px;font-weight:700;color:#474747;transform:scaleX(0.9038);transform-origin:100% 50%;">ACC. DEPRECIATION</div><div class="t" style="right:68.30px;top:335.86px;font-size:4.903px;line-height:5.88px;font-weight:700;color:#474747;transform:scaleX(0.9167);transform-origin:100% 50%;">NET BOOK VALUE</div><div class="t" style="left:377.00px;top:341.86px;font-size:4.903px;line-height:5.88px;font-weight:400;color:#484848;transform:scaleX(0.987);transform-origin:0 50%;-webkit-text-stroke:0.12px #484848;">LTRE - Long Term Rental Equipment</div><div class="t" style="right:244.60px;top:341.86px;font-size:4.903px;line-height:5.88px;font-weight:400;color:#484848;transform:scaleX(0.9981);transform-origin:100% 50%;-webkit-text-stroke:0.12px #484848;">543200</div><div class="t" style="right:185.80px;top:341.86px;font-size:4.903px;line-height:5.88px;font-weight:400;color:#484848;transform:scaleX(0.9981);transform-origin:100% 50%;-webkit-text-stroke:0.12px #484848;">543200</div><div class="t" style="right:127.00px;top:341.86px;font-size:4.903px;line-height:5.88px;font-weight:400;color:#484848;transform:scaleX(0.9981);transform-origin:100% 50%;-webkit-text-stroke:0.12px #484848;">7985</div><div class="t" style="right:68.30px;top:341.86px;font-size:4.903px;line-height:5.88px;font-weight:400;color:#484848;transform:scaleX(0.9981);transform-origin:100% 50%;-webkit-text-stroke:0.12px #484848;">535215</div><div class="t" style="left:377.00px;top:349.86px;font-size:4.903px;line-height:5.88px;font-weight:400;color:#484848;transform:scaleX(0.9833);transform-origin:0 50%;-webkit-text-stroke:0.12px #484848;">STRE - Short Term Rental Equipment</div><div class="t" style="right:244.60px;top:349.86px;font-size:4.903px;line-height:5.88px;font-weight:400;color:#484848;transform:scaleX(0.9981);transform-origin:100% 50%;-webkit-text-stroke:0.12px #484848;">446875</div><div class="t" style="right:185.80px;top:349.86px;font-size:4.903px;line-height:5.88px;font-weight:400;color:#484848;transform:scaleX(0.9981);transform-origin:100% 50%;-webkit-text-stroke:0.12px #484848;">446875</div><div class="t" style="right:127.00px;top:349.86px;font-size:4.903px;line-height:5.88px;font-weight:400;color:#484848;transform:scaleX(0.9981);transform-origin:100% 50%;-webkit-text-stroke:0.12px #484848;">6956</div><div class="t" style="right:68.30px;top:349.86px;font-size:4.903px;line-height:5.88px;font-weight:400;color:#484848;transform:scaleX(0.9981);transform-origin:100% 50%;-webkit-text-stroke:0.12px #484848;">439919</div><div class="t" style="left:377.00px;top:356.86px;font-size:4.903px;line-height:5.88px;font-weight:400;color:#484848;transform:scaleX(1.0025);transform-origin:0 50%;-webkit-text-stroke:0.12px #484848;">10 - Buildings</div><div class="t" style="right:244.60px;top:356.86px;font-size:4.903px;line-height:5.88px;font-weight:400;color:#484848;transform:scaleX(0.9981);transform-origin:100% 50%;-webkit-text-stroke:0.12px #484848;">350000</div><div class="t" style="right:185.80px;top:356.86px;font-size:4.903px;line-height:5.88px;font-weight:400;color:#484848;transform:scaleX(0.9981);transform-origin:100% 50%;-webkit-text-stroke:0.12px #484848;">350000</div><div class="t" style="right:68.30px;top:356.86px;font-size:4.903px;line-height:5.88px;font-weight:400;color:#484848;transform:scaleX(0.9981);transform-origin:100% 50%;-webkit-text-stroke:0.12px #484848;">350000</div><div class="t" style="left:377.00px;top:363.86px;font-size:4.903px;line-height:5.88px;font-weight:400;color:#484848;transform:scaleX(1.0004);transform-origin:0 50%;-webkit-text-stroke:0.12px #484848;">20 - Fixtures and Fittings</div><div class="t" style="right:244.60px;top:363.86px;font-size:4.903px;line-height:5.88px;font-weight:400;color:#484848;transform:scaleX(0.9981);transform-origin:100% 50%;-webkit-text-stroke:0.12px #484848;">20000</div><div class="t" style="right:185.80px;top:363.86px;font-size:4.903px;line-height:5.88px;font-weight:400;color:#484848;transform:scaleX(0.9981);transform-origin:100% 50%;-webkit-text-stroke:0.12px #484848;">20000</div><div class="t" style="right:127.00px;top:363.86px;font-size:4.903px;line-height:5.88px;font-weight:400;color:#484848;transform:scaleX(0.9981);transform-origin:100% 50%;-webkit-text-stroke:0.12px #484848;">546</div><div class="t" style="right:68.30px;top:363.86px;font-size:4.903px;line-height:5.88px;font-weight:400;color:#484848;transform:scaleX(0.9981);transform-origin:100% 50%;-webkit-text-stroke:0.12px #484848;">19454</div><div class="t" style="left:377.00px;top:370.86px;font-size:4.903px;line-height:5.88px;font-weight:400;color:#484848;transform:scaleX(0.9578);transform-origin:0 50%;-webkit-text-stroke:0.12px #484848;">40 - Cars</div><div class="t" style="right:244.60px;top:370.86px;font-size:4.903px;line-height:5.88px;font-weight:400;color:#484848;transform:scaleX(0.9981);transform-origin:100% 50%;-webkit-text-stroke:0.12px #484848;">1200</div><div class="t" style="right:185.80px;top:370.86px;font-size:4.903px;line-height:5.88px;font-weight:400;color:#484848;transform:scaleX(0.9981);transform-origin:100% 50%;-webkit-text-stroke:0.12px #484848;">1200</div><div class="t" style="right:68.30px;top:370.86px;font-size:4.903px;line-height:5.88px;font-weight:400;color:#484848;transform:scaleX(0.9981);transform-origin:100% 50%;-webkit-text-stroke:0.12px #484848;">1200</div><div style="position:absolute;left:671.80px;top:381.60px;width:9.8px;height:9.8px;border-radius:50%;background:#d9d9d9"></div><div class="t" style="left:526.70px;width:300px;text-align:center;top:384.86px;font-size:4.903px;line-height:5.88px;font-weight:400;color:#555;transform:scaleX(0.9981);transform-origin:50% 50%;-webkit-text-stroke:0.12px #555;">1</div><div class="t" style="left:536.30px;width:300px;text-align:center;top:384.86px;font-size:4.903px;line-height:5.88px;font-weight:400;color:#5a5a5a;transform:scaleX(0.9981);transform-origin:50% 50%;-webkit-text-stroke:0.12px #5a5a5a;">2</div><div class="t" style="left:545.70px;width:300px;text-align:center;top:385.31px;font-size:4.429px;line-height:5.31px;font-weight:400;color:#999;transform:scaleX(0.9506);transform-origin:50% 50%;-webkit-text-stroke:0.12px #999;">&gt;</div><div style="position:absolute;left:28.00px;top:404.20px;width:336.20px;height:200.00px;background:#ffffff;border-radius:5.5px"></div><div class="t" style="left:34.20px;top:410.90px;font-size:6.976px;line-height:8.37px;font-weight:700;color:#3a3a3a;transform:scaleX(0.8641);transform-origin:0 50%;-webkit-text-stroke:0.15px #3a3a3a;">FIXED ASSET OVERVIEW</div><div class="t" style="left:34.30px;top:421.86px;font-size:4.903px;line-height:5.88px;font-weight:700;color:#474747;transform:scaleX(1.0088);transform-origin:0 50%;">ID</div><div class="t" style="left:88.00px;top:421.86px;font-size:4.903px;line-height:5.88px;font-weight:700;color:#474747;transform:scaleX(0.9201);transform-origin:0 50%;">DESCRIPTION</div><div class="t" style="left:160.00px;top:421.86px;font-size:4.903px;line-height:5.88px;font-weight:700;color:#474747;transform:scaleX(0.881);transform-origin:0 50%;">STATUS</div><div class="t" style="right:519.00px;top:421.86px;font-size:4.903px;line-height:5.88px;font-weight:700;color:#474747;transform:scaleX(0.9178);transform-origin:100% 50%;">AV</div><div class="t" style="right:483.10px;top:421.86px;font-size:4.903px;line-height:5.88px;font-weight:700;color:#474747;transform:scaleX(0.8893);transform-origin:100% 50%;">BV</div><div class="t" style="right:447.20px;top:421.86px;font-size:4.903px;line-height:5.88px;font-weight:700;color:#474747;transform:scaleX(0.9377);transform-origin:100% 50%;">AD</div><div class="t" style="right:410.40px;top:421.86px;font-size:4.903px;line-height:5.88px;font-weight:700;color:#474747;transform:scaleX(0.9452);transform-origin:100% 50%;">NBV</div><div class="t" style="left:34.30px;top:427.86px;font-size:4.903px;line-height:5.88px;font-weight:400;color:#484848;transform:scaleX(0.9706);transform-origin:0 50%;-webkit-text-stroke:0.12px #484848;">F100000</div><div class="t" style="left:88.00px;top:427.86px;font-size:4.903px;line-height:5.88px;font-weight:400;color:#484848;transform:scaleX(1.0225);transform-origin:0 50%;-webkit-text-stroke:0.12px #484848;">HQ in Staffordshire</div><div class="t" style="left:160.00px;top:427.86px;font-size:4.903px;line-height:5.88px;font-weight:400;color:#484848;transform:scaleX(0.99);transform-origin:0 50%;-webkit-text-stroke:0.12px #484848;">Active</div><div class="t" style="right:519.00px;top:427.86px;font-size:4.903px;line-height:5.88px;font-weight:400;color:#484848;transform:scaleX(0.9981);transform-origin:100% 50%;-webkit-text-stroke:0.12px #484848;">350000</div><div class="t" style="right:483.10px;top:427.86px;font-size:4.903px;line-height:5.88px;font-weight:400;color:#484848;transform:scaleX(0.9981);transform-origin:100% 50%;-webkit-text-stroke:0.12px #484848;">350000</div><div class="t" style="right:410.40px;top:427.86px;font-size:4.903px;line-height:5.88px;font-weight:400;color:#484848;transform:scaleX(0.9981);transform-origin:100% 50%;-webkit-text-stroke:0.12px #484848;">350000</div><div class="t" style="left:34.30px;top:434.86px;font-size:4.903px;line-height:5.88px;font-weight:400;color:#484848;transform:scaleX(0.9684);transform-origin:0 50%;-webkit-text-stroke:0.12px #484848;">R100071</div><div class="t" style="left:88.00px;top:434.86px;font-size:4.903px;line-height:5.88px;font-weight:400;color:#484848;transform:scaleX(0.8944);transform-origin:0 50%;-webkit-text-stroke:0.12px #484848;">EXCAVATOR CX210C</div><div class="t" style="left:160.00px;top:434.86px;font-size:4.903px;line-height:5.88px;font-weight:400;color:#484848;transform:scaleX(1.0406);transform-origin:0 50%;-webkit-text-stroke:0.12px #484848;">Investment</div><div class="t" style="right:519.00px;top:434.86px;font-size:4.903px;line-height:5.88px;font-weight:400;color:#484848;transform:scaleX(0.9981);transform-origin:100% 50%;-webkit-text-stroke:0.12px #484848;">32500</div><div class="t" style="right:483.10px;top:434.86px;font-size:4.903px;line-height:5.88px;font-weight:400;color:#484848;transform:scaleX(0.9981);transform-origin:100% 50%;-webkit-text-stroke:0.12px #484848;">32500</div><div class="t" style="right:410.40px;top:434.86px;font-size:4.903px;line-height:5.88px;font-weight:400;color:#484848;transform:scaleX(0.9981);transform-origin:100% 50%;-webkit-text-stroke:0.12px #484848;">32500</div><div class="t" style="left:34.30px;top:441.86px;font-size:4.903px;line-height:5.88px;font-weight:400;color:#484848;transform:scaleX(0.9684);transform-origin:0 50%;-webkit-text-stroke:0.12px #484848;">R100057</div><div class="t" style="left:88.00px;top:441.86px;font-size:4.903px;line-height:5.88px;font-weight:400;color:#484848;transform:scaleX(0.8944);transform-origin:0 50%;-webkit-text-stroke:0.12px #484848;">EXCAVATOR CX210C</div><div class="t" style="left:160.00px;top:441.86px;font-size:4.903px;line-height:5.88px;font-weight:400;color:#484848;transform:scaleX(0.99);transform-origin:0 50%;-webkit-text-stroke:0.12px #484848;">Active</div><div class="t" style="right:519.00px;top:441.86px;font-size:4.903px;line-height:5.88px;font-weight:400;color:#484848;transform:scaleX(0.9981);transform-origin:100% 50%;-webkit-text-stroke:0.12px #484848;">32500</div><div class="t" style="right:483.10px;top:441.86px;font-size:4.903px;line-height:5.88px;font-weight:400;color:#484848;transform:scaleX(0.9981);transform-origin:100% 50%;-webkit-text-stroke:0.12px #484848;">32500</div><div class="t" style="right:447.20px;top:441.86px;font-size:4.903px;line-height:5.88px;font-weight:400;color:#484848;transform:scaleX(0.9981);transform-origin:100% 50%;-webkit-text-stroke:0.12px #484848;">301</div><div class="t" style="right:410.40px;top:441.86px;font-size:4.903px;line-height:5.88px;font-weight:400;color:#484848;transform:scaleX(0.9981);transform-origin:100% 50%;-webkit-text-stroke:0.12px #484848;">32199</div><div class="t" style="left:34.30px;top:449.86px;font-size:4.903px;line-height:5.88px;font-weight:400;color:#484848;transform:scaleX(0.9684);transform-origin:0 50%;-webkit-text-stroke:0.12px #484848;">R100042</div><div class="t" style="left:88.00px;top:449.86px;font-size:4.903px;line-height:5.88px;font-weight:400;color:#484848;transform:scaleX(0.8944);transform-origin:0 50%;-webkit-text-stroke:0.12px #484848;">EXCAVATOR CX210C</div><div class="t" style="left:160.00px;top:449.86px;font-size:4.903px;line-height:5.88px;font-weight:400;color:#484848;transform:scaleX(0.99);transform-origin:0 50%;-webkit-text-stroke:0.12px #484848;">Active</div><div class="t" style="right:519.00px;top:449.86px;font-size:4.903px;line-height:5.88px;font-weight:400;color:#484848;transform:scaleX(0.9981);transform-origin:100% 50%;-webkit-text-stroke:0.12px #484848;">24375</div><div class="t" style="right:483.10px;top:449.86px;font-size:4.903px;line-height:5.88px;font-weight:400;color:#484848;transform:scaleX(0.9981);transform-origin:100% 50%;-webkit-text-stroke:0.12px #484848;">24375</div><div class="t" style="right:447.20px;top:449.86px;font-size:4.903px;line-height:5.88px;font-weight:400;color:#484848;transform:scaleX(0.9981);transform-origin:100% 50%;-webkit-text-stroke:0.12px #484848;">452</div><div class="t" style="right:410.40px;top:449.86px;font-size:4.903px;line-height:5.88px;font-weight:400;color:#484848;transform:scaleX(0.9981);transform-origin:100% 50%;-webkit-text-stroke:0.12px #484848;">23923</div><div class="t" style="left:34.30px;top:456.86px;font-size:4.903px;line-height:5.88px;font-weight:400;color:#484848;transform:scaleX(0.9684);transform-origin:0 50%;-webkit-text-stroke:0.12px #484848;">R100043</div><div class="t" style="left:88.00px;top:456.86px;font-size:4.903px;line-height:5.88px;font-weight:400;color:#484848;transform:scaleX(0.8944);transform-origin:0 50%;-webkit-text-stroke:0.12px #484848;">EXCAVATOR CX210C</div><div class="t" style="left:160.00px;top:456.86px;font-size:4.903px;line-height:5.88px;font-weight:400;color:#484848;transform:scaleX(0.99);transform-origin:0 50%;-webkit-text-stroke:0.12px #484848;">Active</div><div class="t" style="right:519.00px;top:456.86px;font-size:4.903px;line-height:5.88px;font-weight:400;color:#484848;transform:scaleX(0.9981);transform-origin:100% 50%;-webkit-text-stroke:0.12px #484848;">24375</div><div class="t" style="right:483.10px;top:456.86px;font-size:4.903px;line-height:5.88px;font-weight:400;color:#484848;transform:scaleX(0.9981);transform-origin:100% 50%;-webkit-text-stroke:0.12px #484848;">24375</div><div class="t" style="right:447.20px;top:456.86px;font-size:4.903px;line-height:5.88px;font-weight:400;color:#484848;transform:scaleX(0.9981);transform-origin:100% 50%;-webkit-text-stroke:0.12px #484848;">452</div><div class="t" style="right:410.40px;top:456.86px;font-size:4.903px;line-height:5.88px;font-weight:400;color:#484848;transform:scaleX(0.9981);transform-origin:100% 50%;-webkit-text-stroke:0.12px #484848;">23923</div><div class="t" style="left:34.30px;top:463.86px;font-size:4.903px;line-height:5.88px;font-weight:400;color:#484848;transform:scaleX(0.9684);transform-origin:0 50%;-webkit-text-stroke:0.12px #484848;">R100044</div><div class="t" style="left:88.00px;top:463.86px;font-size:4.903px;line-height:5.88px;font-weight:400;color:#484848;transform:scaleX(0.8944);transform-origin:0 50%;-webkit-text-stroke:0.12px #484848;">EXCAVATOR CX210C</div><div class="t" style="left:160.00px;top:463.86px;font-size:4.903px;line-height:5.88px;font-weight:400;color:#484848;transform:scaleX(0.99);transform-origin:0 50%;-webkit-text-stroke:0.12px #484848;">Active</div><div class="t" style="right:519.00px;top:463.86px;font-size:4.903px;line-height:5.88px;font-weight:400;color:#484848;transform:scaleX(0.9981);transform-origin:100% 50%;-webkit-text-stroke:0.12px #484848;">24375</div><div class="t" style="right:483.10px;top:463.86px;font-size:4.903px;line-height:5.88px;font-weight:400;color:#484848;transform:scaleX(0.9981);transform-origin:100% 50%;-webkit-text-stroke:0.12px #484848;">24375</div><div class="t" style="right:447.20px;top:463.86px;font-size:4.903px;line-height:5.88px;font-weight:400;color:#484848;transform:scaleX(0.9981);transform-origin:100% 50%;-webkit-text-stroke:0.12px #484848;">452</div><div class="t" style="right:410.40px;top:463.86px;font-size:4.903px;line-height:5.88px;font-weight:400;color:#484848;transform:scaleX(0.9981);transform-origin:100% 50%;-webkit-text-stroke:0.12px #484848;">23923</div><div class="t" style="left:34.30px;top:470.86px;font-size:4.903px;line-height:5.88px;font-weight:400;color:#484848;transform:scaleX(0.9684);transform-origin:0 50%;-webkit-text-stroke:0.12px #484848;">R100045</div><div class="t" style="left:88.00px;top:470.86px;font-size:4.903px;line-height:5.88px;font-weight:400;color:#484848;transform:scaleX(0.8944);transform-origin:0 50%;-webkit-text-stroke:0.12px #484848;">EXCAVATOR CX210C</div><div class="t" style="left:160.00px;top:470.86px;font-size:4.903px;line-height:5.88px;font-weight:400;color:#484848;transform:scaleX(0.99);transform-origin:0 50%;-webkit-text-stroke:0.12px #484848;">Active</div><div class="t" style="right:519.00px;top:470.86px;font-size:4.903px;line-height:5.88px;font-weight:400;color:#484848;transform:scaleX(0.9981);transform-origin:100% 50%;-webkit-text-stroke:0.12px #484848;">24375</div><div class="t" style="right:483.10px;top:470.86px;font-size:4.903px;line-height:5.88px;font-weight:400;color:#484848;transform:scaleX(0.9981);transform-origin:100% 50%;-webkit-text-stroke:0.12px #484848;">24375</div><div class="t" style="right:447.20px;top:470.86px;font-size:4.903px;line-height:5.88px;font-weight:400;color:#484848;transform:scaleX(0.9981);transform-origin:100% 50%;-webkit-text-stroke:0.12px #484848;">452</div><div class="t" style="right:410.40px;top:470.86px;font-size:4.903px;line-height:5.88px;font-weight:400;color:#484848;transform:scaleX(0.9981);transform-origin:100% 50%;-webkit-text-stroke:0.12px #484848;">23923</div><div class="t" style="left:34.30px;top:477.86px;font-size:4.903px;line-height:5.88px;font-weight:400;color:#484848;transform:scaleX(0.9684);transform-origin:0 50%;-webkit-text-stroke:0.12px #484848;">R100059</div><div class="t" style="left:88.00px;top:477.86px;font-size:4.903px;line-height:5.88px;font-weight:400;color:#484848;transform:scaleX(0.9988);transform-origin:0 50%;-webkit-text-stroke:0.12px #484848;">Access Platform 4.6m</div><div class="t" style="left:160.00px;top:477.86px;font-size:4.903px;line-height:5.88px;font-weight:400;color:#484848;transform:scaleX(1.0406);transform-origin:0 50%;-webkit-text-stroke:0.12px #484848;">Investment</div><div class="t" style="right:519.00px;top:477.86px;font-size:4.903px;line-height:5.88px;font-weight:400;color:#484848;transform:scaleX(0.9981);transform-origin:100% 50%;-webkit-text-stroke:0.12px #484848;">22000</div><div class="t" style="right:483.10px;top:477.86px;font-size:4.903px;line-height:5.88px;font-weight:400;color:#484848;transform:scaleX(0.9981);transform-origin:100% 50%;-webkit-text-stroke:0.12px #484848;">22000</div><div class="t" style="right:410.40px;top:477.86px;font-size:4.903px;line-height:5.88px;font-weight:400;color:#484848;transform:scaleX(0.9981);transform-origin:100% 50%;-webkit-text-stroke:0.12px #484848;">22000</div><div class="t" style="left:34.30px;top:484.86px;font-size:4.903px;line-height:5.88px;font-weight:400;color:#484848;transform:scaleX(0.9684);transform-origin:0 50%;-webkit-text-stroke:0.12px #484848;">R100060</div><div class="t" style="left:88.00px;top:484.86px;font-size:4.903px;line-height:5.88px;font-weight:400;color:#484848;transform:scaleX(0.9988);transform-origin:0 50%;-webkit-text-stroke:0.12px #484848;">Access Platform 4.6m</div><div class="t" style="left:160.00px;top:484.86px;font-size:4.903px;line-height:5.88px;font-weight:400;color:#484848;transform:scaleX(1.0406);transform-origin:0 50%;-webkit-text-stroke:0.12px #484848;">Investment</div><div class="t" style="right:519.00px;top:484.86px;font-size:4.903px;line-height:5.88px;font-weight:400;color:#484848;transform:scaleX(0.9981);transform-origin:100% 50%;-webkit-text-stroke:0.12px #484848;">22000</div><div class="t" style="right:483.10px;top:484.86px;font-size:4.903px;line-height:5.88px;font-weight:400;color:#484848;transform:scaleX(0.9981);transform-origin:100% 50%;-webkit-text-stroke:0.12px #484848;">22000</div><div class="t" style="right:410.40px;top:484.86px;font-size:4.903px;line-height:5.88px;font-weight:400;color:#484848;transform:scaleX(0.9981);transform-origin:100% 50%;-webkit-text-stroke:0.12px #484848;">22000</div><div class="t" style="left:34.30px;top:491.86px;font-size:4.903px;line-height:5.88px;font-weight:400;color:#484848;transform:scaleX(0.9684);transform-origin:0 50%;-webkit-text-stroke:0.12px #484848;">R100061</div><div class="t" style="left:88.00px;top:491.86px;font-size:4.903px;line-height:5.88px;font-weight:400;color:#484848;transform:scaleX(0.9988);transform-origin:0 50%;-webkit-text-stroke:0.12px #484848;">Access Platform 4.6m</div><div class="t" style="left:160.00px;top:491.86px;font-size:4.903px;line-height:5.88px;font-weight:400;color:#484848;transform:scaleX(1.0406);transform-origin:0 50%;-webkit-text-stroke:0.12px #484848;">Investment</div><div class="t" style="right:519.00px;top:491.86px;font-size:4.903px;line-height:5.88px;font-weight:400;color:#484848;transform:scaleX(0.9981);transform-origin:100% 50%;-webkit-text-stroke:0.12px #484848;">22000</div><div class="t" style="right:483.10px;top:491.86px;font-size:4.903px;line-height:5.88px;font-weight:400;color:#484848;transform:scaleX(0.9981);transform-origin:100% 50%;-webkit-text-stroke:0.12px #484848;">22000</div><div class="t" style="right:410.40px;top:491.86px;font-size:4.903px;line-height:5.88px;font-weight:400;color:#484848;transform:scaleX(0.9981);transform-origin:100% 50%;-webkit-text-stroke:0.12px #484848;">22000</div><div class="t" style="left:34.30px;top:499.86px;font-size:4.903px;line-height:5.88px;font-weight:400;color:#484848;transform:scaleX(0.9684);transform-origin:0 50%;-webkit-text-stroke:0.12px #484848;">R100062</div><div class="t" style="left:88.00px;top:499.86px;font-size:4.903px;line-height:5.88px;font-weight:400;color:#484848;transform:scaleX(0.9988);transform-origin:0 50%;-webkit-text-stroke:0.12px #484848;">Access Platform 4.6m</div><div class="t" style="left:160.00px;top:499.86px;font-size:4.903px;line-height:5.88px;font-weight:400;color:#484848;transform:scaleX(1.0406);transform-origin:0 50%;-webkit-text-stroke:0.12px #484848;">Investment</div><div class="t" style="right:519.00px;top:499.86px;font-size:4.903px;line-height:5.88px;font-weight:400;color:#484848;transform:scaleX(0.9981);transform-origin:100% 50%;-webkit-text-stroke:0.12px #484848;">22000</div><div class="t" style="right:483.10px;top:499.86px;font-size:4.903px;line-height:5.88px;font-weight:400;color:#484848;transform:scaleX(0.9981);transform-origin:100% 50%;-webkit-text-stroke:0.12px #484848;">22000</div><div class="t" style="right:410.40px;top:499.86px;font-size:4.903px;line-height:5.88px;font-weight:400;color:#484848;transform:scaleX(0.9981);transform-origin:100% 50%;-webkit-text-stroke:0.12px #484848;">22000</div><div class="t" style="left:34.30px;top:506.86px;font-size:4.903px;line-height:5.88px;font-weight:400;color:#484848;transform:scaleX(0.9684);transform-origin:0 50%;-webkit-text-stroke:0.12px #484848;">R100063</div><div class="t" style="left:88.00px;top:506.86px;font-size:4.903px;line-height:5.88px;font-weight:400;color:#484848;transform:scaleX(0.9988);transform-origin:0 50%;-webkit-text-stroke:0.12px #484848;">Access Platform 4.6m</div><div class="t" style="left:160.00px;top:506.86px;font-size:4.903px;line-height:5.88px;font-weight:400;color:#484848;transform:scaleX(1.0406);transform-origin:0 50%;-webkit-text-stroke:0.12px #484848;">Investment</div><div class="t" style="right:519.00px;top:506.86px;font-size:4.903px;line-height:5.88px;font-weight:400;color:#484848;transform:scaleX(0.9981);transform-origin:100% 50%;-webkit-text-stroke:0.12px #484848;">22000</div><div class="t" style="right:483.10px;top:506.86px;font-size:4.903px;line-height:5.88px;font-weight:400;color:#484848;transform:scaleX(0.9981);transform-origin:100% 50%;-webkit-text-stroke:0.12px #484848;">22000</div><div class="t" style="right:410.40px;top:506.86px;font-size:4.903px;line-height:5.88px;font-weight:400;color:#484848;transform:scaleX(0.9981);transform-origin:100% 50%;-webkit-text-stroke:0.12px #484848;">22000</div><div class="t" style="left:34.30px;top:513.86px;font-size:4.903px;line-height:5.88px;font-weight:400;color:#484848;transform:scaleX(0.9684);transform-origin:0 50%;-webkit-text-stroke:0.12px #484848;">R100046</div><div class="t" style="left:88.00px;top:513.86px;font-size:4.903px;line-height:5.88px;font-weight:400;color:#484848;transform:scaleX(0.9988);transform-origin:0 50%;-webkit-text-stroke:0.12px #484848;">Access Platform 4.6m</div><div class="t" style="left:160.00px;top:513.86px;font-size:4.903px;line-height:5.88px;font-weight:400;color:#484848;transform:scaleX(0.99);transform-origin:0 50%;-webkit-text-stroke:0.12px #484848;">Active</div><div class="t" style="right:519.00px;top:513.86px;font-size:4.903px;line-height:5.88px;font-weight:400;color:#484848;transform:scaleX(0.9981);transform-origin:100% 50%;-webkit-text-stroke:0.12px #484848;">22000</div><div class="t" style="right:483.10px;top:513.86px;font-size:4.903px;line-height:5.88px;font-weight:400;color:#484848;transform:scaleX(0.9981);transform-origin:100% 50%;-webkit-text-stroke:0.12px #484848;">22000</div><div class="t" style="right:447.20px;top:513.86px;font-size:4.903px;line-height:5.88px;font-weight:400;color:#484848;transform:scaleX(0.9981);transform-origin:100% 50%;-webkit-text-stroke:0.12px #484848;">489</div><div class="t" style="right:410.40px;top:513.86px;font-size:4.903px;line-height:5.88px;font-weight:400;color:#484848;transform:scaleX(1.0255);transform-origin:100% 50%;-webkit-text-stroke:0.12px #484848;">21511</div><div style="position:absolute;left:370.80px;top:404.20px;width:336.20px;height:200.00px;background:#ffffff;border-radius:5.5px"></div><div class="t" style="left:377.00px;top:410.90px;font-size:6.976px;line-height:8.37px;font-weight:700;color:#3a3a3a;transform:scaleX(0.8663);transform-origin:0 50%;-webkit-text-stroke:0.15px #3a3a3a;">ANALYSIS BY ASSET GROUP</div><div style="position:absolute;left:394.30px;top:422.10px;width:306.60px;height:0.90px;background:#e4e4e4"></div><div class="t" style="right:377.10px;top:421.05px;font-size:4.7px;line-height:5.64px;font-weight:400;color:#707070;transform:scaleX(0.8799);transform-origin:100% 50%;">600000</div><div style="position:absolute;left:394.30px;top:443.90px;width:306.60px;height:0.90px;background:#e4e4e4"></div><div class="t" style="right:377.10px;top:443.05px;font-size:4.7px;line-height:5.64px;font-weight:400;color:#707070;transform:scaleX(0.8799);transform-origin:100% 50%;">500000</div><div style="position:absolute;left:394.30px;top:465.70px;width:306.60px;height:0.90px;background:#e4e4e4"></div><div class="t" style="right:377.10px;top:465.05px;font-size:4.7px;line-height:5.64px;font-weight:400;color:#707070;transform:scaleX(0.8799);transform-origin:100% 50%;">400000</div><div style="position:absolute;left:394.30px;top:487.50px;width:306.60px;height:0.90px;background:#e4e4e4"></div><div class="t" style="right:377.10px;top:486.05px;font-size:4.7px;line-height:5.64px;font-weight:400;color:#707070;transform:scaleX(0.8799);transform-origin:100% 50%;">300000</div><div style="position:absolute;left:394.30px;top:509.30px;width:306.60px;height:0.90px;background:#e4e4e4"></div><div class="t" style="right:377.10px;top:508.05px;font-size:4.7px;line-height:5.64px;font-weight:400;color:#707070;transform:scaleX(0.8799);transform-origin:100% 50%;">200000</div><div style="position:absolute;left:393.70px;top:423.00px;width:0.90px;height:100.00px;background:#dcdcdc"></div><div style="position:absolute;left:399.70px;top:435.38px;width:7.50px;height:84.62px;background:#b3244f"></div><div style="position:absolute;left:410.20px;top:435.38px;width:7.50px;height:84.62px;background:#4ec2d8"></div><div style="position:absolute;left:431.80px;top:437.12px;width:7.50px;height:82.88px;background:#f06377"></div><div style="position:absolute;left:451.00px;top:456.38px;width:7.50px;height:63.62px;background:#b3244f"></div><div style="position:absolute;left:461.50px;top:456.38px;width:7.50px;height:63.62px;background:#4ec2d8"></div><div style="position:absolute;left:483.10px;top:457.90px;width:7.50px;height:62.10px;background:#f06377"></div><div style="position:absolute;left:502.10px;top:477.50px;width:7.50px;height:42.50px;background:#b3244f"></div><div style="position:absolute;left:512.60px;top:477.50px;width:7.50px;height:42.50px;background:#4ec2d8"></div><div style="position:absolute;left:534.20px;top:477.50px;width:7.50px;height:42.50px;background:#f06377"></div><div style="position:absolute;left:553.30px;top:549.44px;width:7.50px;height:-29.44px;background:#b3244f"></div><div style="position:absolute;left:563.80px;top:549.44px;width:7.50px;height:-29.44px;background:#4ec2d8"></div><div style="position:absolute;left:585.40px;top:549.56px;width:7.50px;height:-29.56px;background:#f06377"></div><svg style="position:absolute;left:690.00px;top:422.90px;overflow:visible" width="7.7" height="7.1" viewBox="0 0 7.7 7.1"><rect width="7.7" height="7.1" rx="1.3" fill="#999"/><path d="M2.2 3 L3.85 4.5 L5.5 3" fill="none" stroke="#eee" stroke-width="0.8"/></svg></div></div>
</body></html>
